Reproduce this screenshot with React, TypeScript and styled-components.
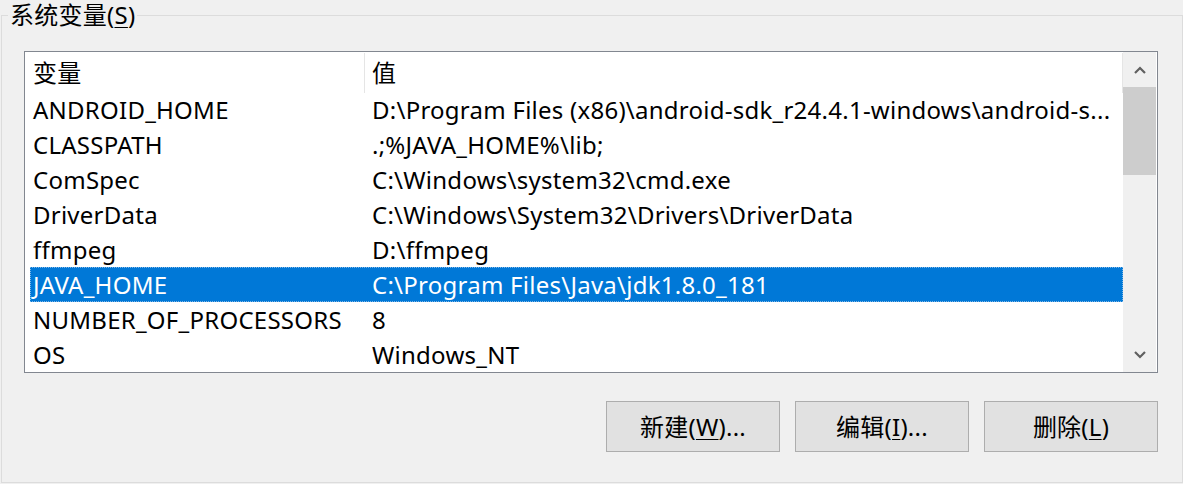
import React from 'react';
import styled, {createGlobalStyle} from 'styled-components';

const GlobalStyle = createGlobalStyle`
  html, body {
    margin: 0;
    padding: 0;
    background: #f0f0f0;
  }
  body {
    font-family: "Noto Sans", "Noto Sans CJK SC", sans-serif;
    font-size: 24px;
    letter-spacing: 0.25px;
    color: #000;
  }
`

const Group = styled.fieldset`
  box-sizing: border-box;
  margin: 0 0 0 1px;
  padding: 0;
  width: 1182px;
  height: 483px;
  border: 1px solid #dcdcdc;
  min-width: 0;
`

const Legend = styled.legend`
  margin-left: 6px;
  padding: 0 2px;
  line-height: 30px;
  color: #000;
`

const Inner = styled.div`
  padding: 21px 24px 0 22px;
`

const List = styled.div`
  display: flex;
  height: 322px;
  box-sizing: border-box;
  border: 1px solid #828790;
  background: #fff;
  padding-right: 1px;
`

const Table = styled.div`
  flex: 1;
  min-width: 0;
  overflow: hidden;
`

const Header = styled.div`
  display: grid;
  grid-template-columns: 340px 1fr;
  height: 40px;
`

const HeadCell = styled.div<{ $first?: boolean }>`
  padding-left: ${p => (p.$first ? 8 : 7)}px;
  line-height: 40px;
  border-right: 1px solid #e5e5e5;
  margin: 1px 0 0;
`

const Row = styled.div<{ $selected?: boolean }>`
  display: grid;
  grid-template-columns: 335px 1fr;
  height: 35px;
  line-height: 35px;
  margin-left: 5px;
  box-sizing: border-box;
  background: ${p => (p.$selected ? '#0078d7' : 'transparent')};
  color: ${p => (p.$selected ? '#fff' : '#000')};
  outline: ${p => (p.$selected ? '1px dotted #7fb6e6' : 'none')};
  outline-offset: -1px;
`

const NameCell = styled.div`
  padding-left: 3px;
  white-space: nowrap;
`

const ValueCell = styled.div`
  padding-left: 7px;
  white-space: nowrap;
`

const ScrollBar = styled.div`
  width: 33px;
  display: flex;
  flex-direction: column;
  background: #f0f0f0;
`

const ArrowButton = styled.div`
  height: 35px;
  display: flex;
  align-items: center;
  justify-content: center;
`

const Thumb = styled.div`
  height: 88px;
  background: #cdcdcd;
`

const Track = styled.div`
  flex: 1;
`

const Buttons = styled.div`
  display: flex;
  justify-content: flex-end;
  gap: 15px;
  margin-top: 28px;
`

const Button = styled.button`
  width: 174px;
  height: 51px;
  box-sizing: border-box;
  background: #e1e1e1;
  border: 1px solid #adadad;
  font: inherit;
  letter-spacing: inherit;
  color: #000;
  padding: 0;
  line-height: 49px;
`

const Key = styled.span`
  text-decoration: underline;
  text-underline-offset: 3px;
  text-decoration-thickness: 1px;
`

const Chevron = ({up}: { up?: boolean }) => (
    <svg width="14" height="10" viewBox="0 0 14 10">
        <path d={up ? 'M2 8 L7 3 L12 8' : 'M2 2 L7 7 L12 2'} fill="none" stroke="#606060" strokeWidth="2.2"/>
    </svg>
)

// values are shown the way the list view cuts them
const vars = [
    ['ANDROID_HOME', 'D:\\Program Files (x86)\\android-sdk_r24.4.1-windows\\android-s...'],
    ['CLASSPATH', '.;%JAVA_HOME%\\lib;'],
    ['ComSpec', 'C:\\Windows\\system32\\cmd.exe'],
    ['DriverData', 'C:\\Windows\\System32\\Drivers\\DriverData'],
    ['ffmpeg', 'D:\\ffmpeg'],
    ['JAVA_HOME', 'C:\\Program Files\\Java\\jdk1.8.0_181'],
    ['NUMBER_OF_PROCESSORS', '8'],
    ['OS', 'Windows_NT'],
]

export default function App() {
    return (
        <>
            <GlobalStyle/>
            <Group>
                <Legend>系统变量(<Key>S</Key>)</Legend>
                <Inner>
                    <List>
                        <Table>
                            <Header>
                                <HeadCell $first>变量</HeadCell>
                                <HeadCell>值</HeadCell>
                            </Header>
                            {vars.map(([name, value]) => (
                                <Row key={name} $selected={name === 'JAVA_HOME'}>
                                    <NameCell>{name}</NameCell>
                                    <ValueCell>{value}</ValueCell>
                                </Row>
                            ))}
                        </Table>
                        <ScrollBar>
                            <ArrowButton><Chevron up/></ArrowButton>
                            <Thumb/>
                            <Track/>
                            <ArrowButton><Chevron/></ArrowButton>
                        </ScrollBar>
                    </List>
                    <Buttons>
                        <Button>新建(<Key>W</Key>)...</Button>
                        <Button>编辑(<Key>I</Key>)...</Button>
                        <Button>删除(<Key>L</Key>)</Button>
                    </Buttons>
                </Inner>
            </Group>
        </>
    );
}
